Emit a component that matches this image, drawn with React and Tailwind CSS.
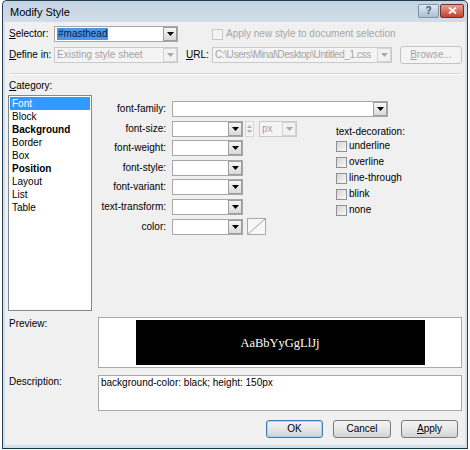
import React from 'react';

const Arrow = ({ disabled }) => (
  <svg width="7" height="4" viewBox="0 0 7 4">
    <polygon points="0,0 7,0 3.5,4" fill={disabled ? '#a8a8a8' : '#000'} />
  </svg>
);

const DropButton = ({ disabled }) => (
  <div
    className={
      'w-[14px] h-[14px] shrink-0 flex items-center justify-center border ' +
      (disabled
        ? 'border-[#d4d4d4] bg-[#f2f2f2]'
        : 'border-[#9d9d9d] bg-linear-to-b from-[#f7f7f7] to-[#d9d9d9]')
    }
  >
    <Arrow disabled={disabled} />
  </div>
);

const Combo = ({ className = '', text, disabled, selected, textClass = '' }) => (
  <div
    className={
      'flex items-center h-[16px] border ' +
      (disabled ? 'border-[#cacaca] bg-[#f4f4f4] ' : 'border-[#a7a7a7] bg-white ') +
      className
    }
  >
    <div className="flex-1 min-w-0 flex items-center pl-[2px] overflow-hidden whitespace-nowrap">
      {text && (
        <span
          className={
            (selected
              ? 'bg-[#4d96e4] text-[#0b1a45] px-[1px] leading-[12px] '
              : disabled
              ? 'text-[#a3a3a3] '
              : 'text-black ') + textClass
          }
        >
          {text}
        </span>
      )}
    </div>
    <DropButton disabled={disabled} />
  </div>
);

const Check = ({ disabled }) => (
  <span
    className={
      'inline-block w-[11px] h-[11px] border ' +
      (disabled
        ? 'border-[#c8c8c8] bg-[#f4f4f4]'
        : 'border-[#919191] bg-linear-to-br from-[#d6d6d6] to-[#f9f9f9]')
    }
  />
);

const Btn = ({ children, primary, className = '' }) => (
  <div
    className={
      'h-[18px] w-[57px] rounded-[3px] border flex items-center justify-center text-black bg-linear-to-b from-[#f3f3f3] via-[#e8e8e8] to-[#d2d2d2] ' +
      (primary
        ? 'border-[#3c7fb1] shadow-[inset_0_0_0_1px_#97d9f7] '
        : 'border-[#7a7a7a] ') +
      className
    }
  >
    {children}
  </div>
);

const categories = [
  { name: 'Font', selected: true },
  { name: 'Block' },
  { name: 'Background', bold: true },
  { name: 'Border' },
  { name: 'Box' },
  { name: 'Position', bold: true },
  { name: 'Layout' },
  { name: 'List' },
  { name: 'Table' },
];

const fontRows = ['font-weight:', 'font-style:', 'font-variant:', 'text-transform:'];

const decorations = ['underline', 'overline', 'line-through', 'blink', 'none'];

export default function App() {
  return (
    <div className="w-[470px] h-[450px] bg-white font-['Liberation_Sans',Arial,sans-serif] text-[10px] leading-[12px] text-black">
      <div className="ml-[2px] w-[466px] h-[449px] border border-[#253c4b] border-b-[#0d3a44] border-r-[#1c4650] rounded-t-[5px] bg-[#d3e0eb] flex flex-col">
        {/* title bar */}
        <div className="h-[21px] flex items-center pl-[7px] pr-[3px] bg-linear-to-b from-[#c3d4e3] to-[#d1dde9] rounded-t-[5px]">
          <span className="text-[11px] text-black">Modify Style</span>
          <div className="ml-auto flex gap-[1px] mt-[-2px]">
            <div className="w-[21px] h-[14px] rounded-[2px] border border-[#7d93a8] bg-linear-to-b from-[#dfe9f2] to-[#aebfd0] flex items-center justify-center text-[10px] font-bold text-[#3e5670]">
              ?
            </div>
            <div className="w-[24px] h-[14px] rounded-[2px] border border-[#7a2f26] bg-linear-to-b from-[#e6a08f] to-[#c1412e] flex items-center justify-center">
              <svg width="9" height="7" viewBox="0 0 9 7">
                <path d="M1 0.5 L8 6.5 M8 0.5 L1 6.5" stroke="#fff" strokeWidth="1.8" />
              </svg>
            </div>
          </div>
        </div>

        {/* client area */}
        <div className="flex-1 mx-[2px] mb-[3px] bg-[#f0f0f0] flex flex-col pl-[3px] pr-[2px]">
          {/* selector row */}
          <div className="flex items-center h-[16px] mt-[4px] pl-[1px]">
            <span className="w-[45px]">
              <u>S</u>elector:
            </span>
            <Combo className="w-[124px]" text="#masthead" selected />
            <div className="ml-[34px] flex items-center gap-[3px] text-[#a6a6a6]">
              <Check disabled />
              <span>Apply new style to document selection</span>
            </div>
          </div>

          {/* define in row */}
          <div className="flex items-center h-[18px] mt-[4px] pl-[1px]">
            <span className="w-[45px]">
              <u>D</u>efine in:
            </span>
            <Combo className="w-[124px]" text="Existing style sheet" disabled />
            <span className="ml-[8px] w-[26px]">
              <u>U</u>RL:
            </span>
            <Combo
              className="w-[180px]"
              text="C:\Users\Minal\Desktop\Untitled_1.css"
              textClass="tracking-[-0.4px]"
              disabled
            />
            <div className="ml-[8px] w-[62px] h-[18px] rounded-[3px] border border-[#c3c3c3] bg-[#f4f4f4] flex items-center justify-center text-[#a3a3a3]">
              <span>
                <u>B</u>rowse...
              </span>
            </div>
          </div>

          {/* separator */}
          <div className="mt-[9px] ml-[2px] mr-[2px] h-[2px] border-t border-[#d5d5d5] border-b border-b-white" />

          <div className="mt-[5px] pl-[1px]">
            <u>C</u>ategory:
          </div>

          {/* main area */}
          <div className="flex mt-[3px]">
            <div className="w-[84px] h-[216px] border border-[#828790] bg-white p-[1px]">
              {categories.map((c) => (
                <div
                  key={c.name}
                  className={
                    'h-[13px] pl-[2px] leading-[13px] ' +
                    (c.selected ? 'bg-[#3399ff] text-white ' : '') +
                    (c.bold ? 'font-bold' : '')
                  }
                >
                  {c.name}
                </div>
              ))}
            </div>

            <div className="flex flex-col mt-[6px] gap-[3.6px]">
              <div className="flex items-center h-[16px]">
                <span className="w-[74px] text-right">font-family:</span>
                <Combo className="ml-[6px] w-[216px]" />
              </div>

              <div className="flex">
                <div className="flex flex-col gap-[3.6px] w-[206px]">
                  <div className="flex items-center h-[16px]">
                    <span className="w-[74px] text-right">font-size:</span>
                    <Combo className="ml-[6px] w-[71px]" />
                    <div className="ml-[2px] w-[9px] h-[16px] flex flex-col items-center justify-center gap-[2px] border border-[#d6d6d6] bg-[#f4f4f4]">
                      <svg width="5" height="3" viewBox="0 0 5 3">
                        <polygon points="0,3 5,3 2.5,0" fill="#b0b0b0" />
                      </svg>
                      <svg width="5" height="3" viewBox="0 0 5 3">
                        <polygon points="0,0 5,0 2.5,3" fill="#b0b0b0" />
                      </svg>
                    </div>
                    <Combo className="ml-[5px] w-[38px]" text="px" disabled />
                  </div>
                  {fontRows.map((r) => (
                    <div key={r} className="flex items-center h-[16px]">
                      <span className="w-[74px] text-right">{r}</span>
                      <Combo className="ml-[6px] w-[71px]" />
                    </div>
                  ))}
                  <div className="flex items-center h-[16px]">
                    <span className="w-[74px] text-right">color:</span>
                    <Combo className="ml-[6px] w-[71px]" />
                    <div className="ml-[4px] w-[19px] h-[17px] border border-[#a9a9a9] bg-[#f7f7f7]">
                      <svg width="17" height="15" viewBox="0 0 17 15">
                        <path d="M0 15 L17 0" stroke="#a0a0a0" strokeWidth="1" />
                      </svg>
                    </div>
                  </div>
                </div>

                <div className="ml-[38px] mt-[5px] flex flex-col">
                  <span className="h-[12px]">text-decoration:</span>
                  <div className="flex flex-col mt-[3px] gap-[5px]">
                    {decorations.map((d) => (
                      <div key={d} className="flex items-center gap-[2px] h-[11px]">
                        <Check />
                        <span>{d}</span>
                      </div>
                    ))}
                  </div>
                </div>
              </div>
            </div>
          </div>

          {/* preview */}
          <div className="flex mt-[6px]">
            <span className="w-[90px] pl-[1px] mt-[1px]">Preview:</span>
            <div className="w-[364px] h-[51px] border border-[#a9a9a9] bg-white flex justify-center py-[2px]">
              <div className="w-[289px] h-full bg-black flex items-center justify-center">
                <span className="font-['Liberation_Serif','Times_New_Roman',serif] text-[12.5px] text-white">
                  AaBbYyGgLlJj
                </span>
              </div>
            </div>
          </div>

          {/* description */}
          <div className="flex mt-[7px]">
            <span className="w-[90px] pl-[1px] mt-[1px]">Description:</span>
            <div className="w-[364px] h-[36px] border border-[#a9a9a9] bg-white px-[2px] pt-[1px]">
              background-color: black; height: 150px
            </div>
          </div>

          {/* buttons */}
          <div className="flex justify-end gap-[10px] mt-[9px] pr-[5px]">
            <Btn primary>OK</Btn>
            <Btn className="w-[58px]">Cancel</Btn>
            <Btn>
              <span>
                <u>A</u>pply
              </span>
            </Btn>
          </div>
        </div>
      </div>
    </div>
  );
}
